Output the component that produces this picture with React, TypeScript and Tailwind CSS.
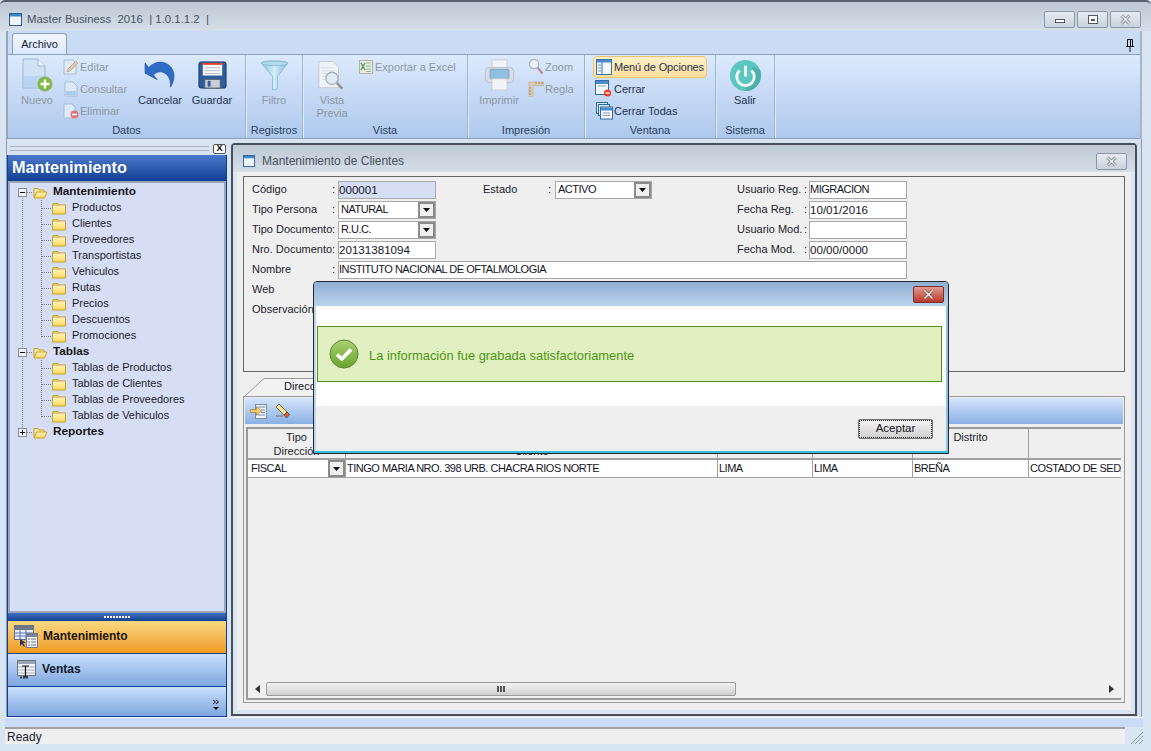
import React from "react";

const WinIcon = ({ s = 14 }: { s?: number }) => (
  <svg width={s} height={s} viewBox="0 0 14 14" className="shrink-0">
    <rect x="0.5" y="0.5" width="12" height="12" fill="#eef5fb" stroke="#2a5f96" />
    <rect x="1" y="1" width="11" height="2.5" fill="#3f86c6" />
  </svg>
);

const Folder = ({ open }: { open?: boolean }) => (
  <svg width="15" height="13" viewBox="0 0 15 13" className="shrink-0">
    <defs>
      <linearGradient id="fg" x1="0" y1="0" x2="0" y2="1">
        <stop offset="0" stopColor="#fff7c4" />
        <stop offset="1" stopColor="#fbd65c" />
      </linearGradient>
    </defs>
    {open ? (
      <>
        <path d="M1 11V2.5h4l1 1.5h5v2" fill="#fdeaa0" stroke="#c9a12e" />
        <path d="M1 12l2.5-6H14l-2.5 6z" fill="url(#fg)" stroke="#c9a12e" />
      </>
    ) : (
      <>
        <path d="M1 3V1.5h5L7 3" fill="#fdeaa0" stroke="#c9a12e" />
        <rect x="0.5" y="3" width="13" height="9" fill="url(#fg)" stroke="#c9a12e" />
      </>
    )}
  </svg>
);

const Dot = "#7d7d7d";
const TopConn = ({ plus, more, first }: { plus?: boolean; more?: boolean; first?: boolean }) => (
  <svg width="23" height="16" viewBox="0 0 23 16" className="shrink-0">
    {!first && <line x1="12.5" y1="0" x2="12.5" y2="4" stroke={Dot} strokeDasharray="1 1" />}
    {more && <line x1="12.5" y1="12" x2="12.5" y2="16" stroke={Dot} strokeDasharray="1 1" />}
    <line x1="17" y1="8.5" x2="23" y2="8.5" stroke={Dot} strokeDasharray="1 1" />
    <rect x="8.5" y="4.5" width="8" height="8" fill="#f5f6fa" stroke="#7f8a99" />
    <line x1="10" y1="8.5" x2="15" y2="8.5" stroke="#111" />
    {plus && <line x1="12.5" y1="6" x2="12.5" y2="11" stroke="#111" />}
  </svg>
);
const ChildConn = ({ last, more }: { last?: boolean; more?: boolean }) => (
  <svg width="42" height="16" viewBox="0 0 42 16" className="shrink-0">
    {more && <line x1="12.5" y1="0" x2="12.5" y2="16" stroke={Dot} strokeDasharray="1 1" />}
    <line x1="31.5" y1="0" x2="31.5" y2={last ? 9 : 16} stroke={Dot} strokeDasharray="1 1" />
    <line x1="32" y1="8.5" x2="42" y2="8.5" stroke={Dot} strokeDasharray="1 1" />
  </svg>
);

const TopNode = ({ label, plus, more, first }: { label: string; plus?: boolean; more?: boolean; first?: boolean }) => (
  <div className="flex h-4 items-center">
    <TopConn plus={plus} more={more} first={first} />
    <Folder open />
    <span className="ml-[5px] pb-[2px] text-[11.75px] font-bold text-[#151515]">{label}</span>
  </div>
);
const Child = ({ label, last, more }: { label: string; last?: boolean; more?: boolean }) => (
  <div className="flex h-4 items-center">
    <ChildConn last={last} more={more} />
    <Folder />
    <span className="ml-[5px] pb-[2px] text-[#1c1c2c]">{label}</span>
  </div>
);

const DocBase = ({ dim }: { dim?: boolean }) => (
  <>
    <path d="M3 1h15l7 7v22H3z" fill={dim ? "#d5e4f5" : "#cfe2f6"} stroke="#9ab6d4" />
    <path d="M18 1v7h7" fill="#f3f8fd" stroke="#9ab6d4" />
    <rect x="4" y="18" width="20" height="11" fill="#a9cdf0" opacity="0.6" />
  </>
);

const IconNuevo = () => (
  <svg width="34" height="34" viewBox="0 0 34 34">
    <DocBase />
    <circle cx="25" cy="26" r="7" fill="#7dbb3c" stroke="#8fa56a" />
    <path d="M25 21.5v9M20.5 26h9" stroke="#fff" strokeWidth="2.4" />
  </svg>
);
const IconUndo = () => (
  <svg width="32" height="30" viewBox="0 0 34 32">
    <path d="M1 14l0-11 4 5C10 3 16 1 22 3c8 3 12 11 9 20-1 3-2 5-3 6 1-7-2-14-8-16-4-1-7 0-10 3l4 5z" fill="#2f6cc5" stroke="#1f4f9e" strokeWidth="0.6" />
  </svg>
);
const IconSave = () => (
  <svg width="29" height="29" viewBox="0 0 30 30">
    <rect x="1" y="1" width="28" height="27" rx="2" fill="#2d5d9e" stroke="#17335f" />
    <rect x="5" y="2" width="20" height="13" fill="#fbfbfb" />
    <rect x="5" y="2" width="20" height="2" fill="#e2432b" />
    <path d="M7 7h16M7 10h16M7 13h16" stroke="#b5b9c2" />
    <rect x="7" y="19" width="16" height="9" fill="#c9ced6" stroke="#59606b" />
    <rect x="10" y="20.5" width="3" height="6" fill="#2d5d9e" />
  </svg>
);
const IconFilter = () => (
  <svg width="29" height="31" viewBox="0 0 30 32">
    <defs>
      <linearGradient id="ff" x1="0" y1="0" x2="1" y2="0">
        <stop offset="0" stopColor="#7fc4dd" />
        <stop offset="0.5" stopColor="#d4edf6" />
        <stop offset="1" stopColor="#78bcd8" />
      </linearGradient>
    </defs>
    <path d="M1 3C5 0 25 0 29 3L18 17v13l-5 1V17z" fill="url(#ff)" stroke="#8dbdd3" />
    <ellipse cx="15" cy="3.5" rx="13" ry="2.3" fill="#b6dcec" stroke="#8dbdd3" />
  </svg>
);
const IconPreview = () => (
  <svg width="30" height="31" viewBox="0 0 32 32">
    <path d="M2 1h15l6 6v22H2z" fill="#eef3f8" stroke="#c1c9d3" />
    <path d="M5 8h12M5 11h14M5 14h14M5 17h14M5 20h10" stroke="#d7dbe2" />
    <circle cx="16" cy="19" r="6.5" fill="#dbeaf5" fillOpacity="0.7" stroke="#a5adb8" strokeWidth="1.4" />
    <path d="M21 24l6 6" stroke="#8e8f90" strokeWidth="2.4" />
  </svg>
);
const IconPrinter = () => (
  <svg width="31" height="32" viewBox="0 0 32 34">
    <rect x="8" y="1" width="16" height="10" fill="#f2f5f8" stroke="#c5ccd5" />
    <rect x="1" y="9" width="30" height="16" rx="4" fill="#d7dee6" stroke="#b8c0ca" />
    <rect x="6" y="11" width="20" height="10" rx="1" fill="#8fc0e0" stroke="#7da4c0" />
    <rect x="8" y="21" width="16" height="12" fill="#f2f5f8" stroke="#c5ccd5" />
  </svg>
);
const IconMag = () => (
  <svg width="16" height="18" viewBox="0 0 16 18">
    <circle cx="6" cy="6" r="4.6" fill="#eaf2fa" stroke="#a7b1bd" strokeWidth="1.2" />
    <path d="M9.5 9.5l5 6" stroke="#b58a8a" strokeWidth="2" />
  </svg>
);
const IconRuler = () => (
  <svg width="16" height="16" viewBox="0 0 16 16">
    <path d="M1 1h15v3.5H5V16H1z" fill="#dfcdb3" stroke="#b9a487" strokeWidth="0.6" />
    <path d="M8 1v2M11 1v2M14 1v2M1 7h2M1 10h2M1 13h2" stroke="#9c8566" />
  </svg>
);
const IconEdit = () => (
  <svg width="16" height="16" viewBox="0 0 16 16">
    <path d="M1 1h9l3 3v11H1z" fill="#dfeaf7" stroke="#a8bdd4" />
    <path d="M4 13l1-3 8-8 2 2-8 8z" fill="#ecc2a3" stroke="#a89a8e" strokeWidth="0.6" />
  </svg>
);
const IconDoc = () => (
  <svg width="16" height="16" viewBox="0 0 16 16">
    <path d="M2 1h8l4 4v10H2z" fill="#dce9f7" stroke="#a8bdd4" />
    <rect x="3" y="10" width="10" height="4" fill="#a9cdf0" />
  </svg>
);
const IconDel = () => (
  <svg width="16" height="16" viewBox="0 0 16 16">
    <path d="M1 1h8l3 3v11H1z" fill="#dce9f7" stroke="#a8bdd4" />
    <circle cx="11.5" cy="11.5" r="4" fill="#dd7b78" />
    <path d="M9 11.5h5" stroke="#fff" strokeWidth="1.4" />
  </svg>
);
const IconExcel = () => (
  <svg width="14" height="14" viewBox="0 0 14 14">
    <rect x="0.5" y="0.5" width="13" height="13" fill="#e4ece0" stroke="#a9b5a5" />
    <path d="M7 3h5M7 6h5M7 9h5M7 11.5h5" stroke="#9fb59c" />
    <path d="M2 3l4 7M6 3l-4 7" stroke="#5f9a63" strokeWidth="1.5" />
  </svg>
);
const IconMenu = () => (
  <svg width="16" height="16" viewBox="0 0 16 16">
    <rect x="0.5" y="0.5" width="15" height="15" fill="#f3f8fd" stroke="#3973ad" />
    <rect x="1" y="1" width="14" height="2.5" fill="#4a8ccb" />
    <path d="M6 3.5V15" stroke="#3973ad" />
    <path d="M2 6h3M2 9h3M2 12h3" stroke="#6f9ac5" />
  </svg>
);
const IconClose = () => (
  <svg width="18" height="18" viewBox="0 0 18 18">
    <rect x="0.5" y="0.5" width="13" height="14" fill="#f3f8fd" stroke="#2f6aa6" />
    <rect x="1" y="1" width="12" height="3" fill="#4a8ccb" />
    <path d="M3 6h8" stroke="#8aa" />
    <circle cx="12.5" cy="13" r="3.6" fill="#e8402f" />
    <path d="M10.5 13h4" stroke="#fff" strokeWidth="1.3" />
  </svg>
);
const IconCloseAll = () => (
  <svg width="17" height="18" viewBox="0 0 17 18">
    <rect x="0.5" y="0.5" width="11" height="11" fill="#d8e8f6" stroke="#2f6aa6" />
    <rect x="2.5" y="2.5" width="11" height="11" fill="#d8e8f6" stroke="#2f6aa6" />
    <rect x="4.5" y="5" width="12" height="12" fill="#f3f8fd" stroke="#2f6aa6" />
    <rect x="5" y="5.5" width="11" height="3" fill="#4a8ccb" />
    <path d="M7 11h7M7 13.5h7" stroke="#99b" />
  </svg>
);
const IconPower = () => (
  <svg width="33" height="33" viewBox="0 0 34 34">
    <circle cx="17" cy="17" r="16" fill="#5cc7c0" />
    <path d="M17 33a16 16 0 0 0 16-16c0-2-0.4-4-1-5.600L24 8l-1 17-8 8z" fill="#46a6a2" opacity="0.7" />
    <path d="M10.800 11.800a9 9 0 1 0 12.400 0" fill="none" stroke="#f4fbfb" strokeWidth="3" />
    <path d="M17 7v11" stroke="#f4fbfb" strokeWidth="3" />
  </svg>
);
const IconPin = () => (
  <svg width="8" height="13" viewBox="0 0 8 13">
    <path d="M1.500 0.500h5v7h-5zM0 7.500h8M4 8v5" fill="none" stroke="#111" />
    <path d="M4.500 1v6" stroke="#111" />
  </svg>
);
const IconNavMant = () => (
  <svg width="25" height="24" viewBox="0 0 25 24">
    <rect x="0.500" y="0.500" width="19" height="14" fill="#e8ecf2" stroke="#66707f" />
    <rect x="1" y="1" width="18" height="4" fill="#6e7888" />
    <path d="M1 8h18M1 11h18M6 5v9M12 5v9" stroke="#5a78b8" />
    <path d="M6 14l0 7 2-2 2 3 1-1-2-3h3z" fill="#1d3768" />
    <rect x="12.500" y="8.500" width="11" height="14" fill="#edf0f4" stroke="#6e7888" />
    <rect x="13" y="9" width="10" height="3" fill="#7b8595" />
    <path d="M17 14h5M17 17h5M17 20h5M14 14h2M14 17h2M14 20h2" stroke="#6e7888" />
  </svg>
);
const IconNavVentas = () => (
  <svg width="20" height="20" viewBox="0 0 20 20">
    <rect x="0.500" y="0.500" width="18" height="15" fill="#f3f5f8" stroke="#6c7585" />
    <rect x="1" y="1" width="17" height="3" fill="#9aa5b5" />
    <path d="M1 7h17M1 10h17M1 13h17" stroke="#a8b0be" />
    <path d="M5 6h7M8.500 6v11M6 17h5" stroke="#111" strokeWidth="1.200" />
    <rect x="3" y="16.500" width="2" height="2" fill="#333" />
    <rect x="6" y="16.500" width="2" height="2" fill="#333" />
    <rect x="9" y="16.500" width="2" height="2" fill="#333" />
  </svg>
);
const IconTool1 = () => (
  <svg width="17" height="15" viewBox="0 0 17 15">
    <rect x="5.500" y="0.500" width="11" height="14" fill="#f2f6fa" stroke="#7d8ea3" />
    <path d="M8 3h7M8 11h7M11 6h4M11 8.500h4" stroke="#5f88c0" />
    <path d="M0.500 5.500h6v-3l5 4.500-5 4.500v-3h-6z" fill="#f5cd6a" stroke="#a67d20" strokeWidth="0.700" />
  </svg>
);
const IconTool2 = () => (
  <svg width="15" height="15" viewBox="0 0 15 15">
    <path d="M1 3l3-3 8 8-3 3z" fill="#f7e78c" stroke="#333" strokeWidth="0.700" />
    <path d="M9 11l3-3 2.500 2.500-3 3.500z" fill="#e45e2c" stroke="#333" strokeWidth="0.700" />
    <path d="M1 12h7" stroke="#888" strokeWidth="1.500" />
  </svg>
);
const IconCheck = () => (
  <svg width="30" height="31" viewBox="0 0 30 31">
    <defs>
      <linearGradient id="cg" x1="0" y1="0" x2="0" y2="1">
        <stop offset="0" stopColor="#a9d173" />
        <stop offset="1" stopColor="#69a42e" />
      </linearGradient>
    </defs>
    <circle cx="15" cy="15" r="14" fill="url(#cg)" stroke="#5f8a39" />
    <path d="M8 15.500l4.800 4.500L22 10.500" fill="none" stroke="#fff" strokeWidth="3.600" />
  </svg>
);

const Big = ({ icon, label, w, dim }: { icon: React.ReactNode; label: React.ReactNode; w: string; dim?: boolean }) => (
  <div className={`flex flex-col items-center pt-[3px] ${w}`}>
    <div className="flex h-[34px] items-center justify-center">{icon}</div>
    <div className={`mt-[2px] text-center leading-[13px] ${dim ? "text-[#8d97a4]" : "text-[#1f3350]"}`}>{label}</div>
  </div>
);

const Small = ({ icon, label, dim, w = "w-[16px]" }: { icon: React.ReactNode; label: string; dim?: boolean; w?: string }) => (
  <div className="flex h-[22px] items-center">
    <div className={`${w} flex justify-center`}>{icon}</div>
    <span className={`ml-[1px] whitespace-nowrap ${dim ? "text-[#8d97a4]" : "text-[#1f3350]"}`}>{label}</span>
  </div>
);

const Group = ({ w, label, children }: { w: string; label: string; children: React.ReactNode }) => (
  <div className={`flex flex-col border-r border-[#9db4d4] shadow-[1px_0_0_#dfeafb] ${w}`}>
    <div className="flex h-[67px]">{children}</div>
    <div className="flex-1 pt-[1px] text-center leading-[15px] text-[#27405f]">{label}</div>
  </div>
);

const WinBtn = ({ children }: { children: React.ReactNode }) => (
  <div className="flex h-[17px] w-[31px] items-center justify-center rounded-[2px] border border-[#8a97a6] bg-gradient-to-b from-[#e6ecf2] to-[#c8d2dc]">
    {children}
  </div>
);

const XGlyph = ({ c = "#6b7785", i = "#ffffff" }: { c?: string; i?: string }) => (
  <svg width="13" height="11" viewBox="0 0 13 11">
    <path d="M2.500 1.500l8 8M10.500 1.500l-8 8" stroke={c} strokeWidth="3" />
    <path d="M2.500 1.500l8 8M10.500 1.500l-8 8" stroke={i} strokeWidth="1.300" />
  </svg>
);

const Arrow = () => (
  <div className="flex h-full w-[17px] shrink-0 items-center justify-center border-2 border-[#8a8a8a] bg-[#efefef]">
    <svg width="7" height="4" viewBox="0 0 7 4"><path d="M0 0h7L3.500 4z" fill="#111" /></svg>
  </div>
);

const Lbl = ({ w, children }: { w: string; children: React.ReactNode }) => (
  <div className={`${w} flex shrink-0 whitespace-nowrap`}>{children}</div>
);

const Caps = ({ children }: { children: React.ReactNode }) => (
  <span className="tracking-[-0.5px]">{children}</span>
);

const Input = ({ w, v, bg = "bg-white", caps }: { w: string; v: string; bg?: string; caps?: boolean }) => (
  <div className={`h-[18px] ${w} shrink-0 overflow-hidden whitespace-nowrap border border-[#a8a8a8] ${bg} leading-[15px] text-[#15151f] ${caps ? "" : "text-[11.6px]"}`}>
    {caps ? <Caps>{v}</Caps> : v}
  </div>
);

const Combo = ({ w, v }: { w: string; v: string }) => (
  <div className={`h-[18px] ${w} flex shrink-0 justify-between border border-[#a8a8a8] bg-white pl-[2px] leading-[15px] text-[#15151f]`}>
    <Caps>{v}</Caps>
    <Arrow />
  </div>
);

const Colon = ({ w = "w-[6px]" }: { w?: string }) => <div className={`${w} shrink-0`}>:</div>;

const Cell = ({ w, children, last }: { w: string; children?: React.ReactNode; last?: boolean }) => (
  <div className={`${w} shrink-0 overflow-hidden whitespace-nowrap pl-[1px] ${last ? "" : "border-r border-[#a0a0a0]"}`}><Caps>{children}</Caps></div>
);

const Head = ({ w, children }: { w: string; children?: React.ReactNode }) => (
  <div className={`${w} shrink-0 border-r border-[#a0a0a0] pt-[1px] text-center leading-[14px] text-[#1c1c2c]`}>{children}</div>
);

export default function App() {
  return (
    <div className="relative flex h-[751px] w-[1151px] flex-col overflow-hidden bg-[#d8e5f2] font-['Liberation_Sans',sans-serif] text-[11px] text-[#1c1c2c]">
      {/* Title bar */}
      <div className="flex h-[31px] shrink-0 items-center rounded-t-[5px] border-t-2 border-[#59616d] bg-gradient-to-b from-[#bcc8d3] to-[#d5dfe9] pl-[9px] pr-[10px] pt-[7px]">
        <WinIcon />
        <span className="ml-[4px] whitespace-pre text-[11.4px] text-[#47525f]">Master Business  2016  | 1.0.1.1.2  |</span>
        <div className="ml-auto flex gap-[2px] pb-[1px]">
          <WinBtn><div className="mt-[3px] h-[4px] w-[10px] border border-[#4d5a68] bg-white" /></WinBtn>
          <WinBtn><div className="flex h-[9px] w-[10px] items-center justify-center border border-[#4d5a68] bg-white"><div className="h-[2px] w-[4px] bg-[#4d5a68]" /></div></WinBtn>
          <WinBtn><XGlyph /></WinBtn>
        </div>
      </div>

      {/* Ribbon */}
      <div className="mx-[6px] mr-[9px] flex shrink-0 flex-col border-x-2 border-[#98a4b3] border-r-[#aab6c6]">
        <div className="flex h-[23px] items-end justify-between bg-[#c9dbf5] pl-[4px] pr-[6px]">
          <div className="flex h-[21px] w-[55px] items-center justify-center rounded-t-[3px] border border-b-0 border-[#8ba0bd] bg-gradient-to-b from-[#f2f7fe] to-[#dbe9fd] text-[#152238]">Archivo</div>
          <div className="pb-[2px]"><IconPin /></div>
        </div>
        <div className="flex h-[85px] border-y border-[#8aa0bd] bg-gradient-to-b from-[#dceafd] to-[#aec8ec]">
          <Group w="w-[238px]" label="Datos">
            <div className="w-[4px]" />
            <Big icon={<IconNuevo />} label="Nuevo" w="w-[50px]" dim />
            <div className="w-[72px] pl-[1px] pt-[1px]">
              <Small icon={<IconEdit />} label="Editar" dim />
              <Small icon={<IconDoc />} label="Consultar" dim />
              <Small icon={<IconDel />} label="Eliminar" dim />
            </div>
            <Big icon={<IconUndo />} label="Cancelar" w="w-[52px]" />
            <Big icon={<IconSave />} label="Guardar" w="w-[52px]" />
          </Group>
          <Group w="w-[57px]" label="Registros">
            <Big icon={<IconFilter />} label="Filtro" w="w-[56px]" dim />
          </Group>
          <Group w="w-[165px]" label="Vista">
            <div className="w-[4px]" />
            <Big icon={<IconPreview />} label={<>Vista<br />Previa</>} w="w-[50px]" dim />
            <div className="pl-[1px] pt-[1px]">
              <Small icon={<IconExcel />} label="Exportar a Excel" dim />
            </div>
          </Group>
          <Group w="w-[117px]" label="Impresión">
            <div className="w-[6px]" />
            <Big icon={<IconPrinter />} label="Imprimir" w="w-[50px]" dim />
            <div className="pl-[4px] pt-[1px]">
              <Small icon={<IconMag />} label="Zoom" dim />
              <Small icon={<IconRuler />} label="Regla" dim />
            </div>
          </Group>
          <Group w="w-[131px]" label="Ventana">
            <div className="pl-[8px] pt-[1px]">
              <div className="flex h-[22px] w-[114px] items-center rounded-[4px] border border-[#efc46c] bg-gradient-to-b from-[#fff0c8] to-[#fddf9c] pl-[2px]">
                <IconMenu />
                <span className="ml-[2px] whitespace-nowrap tracking-[-0.15px] text-[#1f3350]">Menú de Opciones</span>
              </div>
              <div className="pl-[2px]">
                <Small icon={<IconClose />} label="Cerrar" w="w-[18px]" />
                <Small icon={<IconCloseAll />} label="Cerrar Todas" w="w-[18px]" />
              </div>
            </div>
          </Group>
          <Group w="w-[59px]" label="Sistema">
            <Big icon={<IconPower />} label="Salir" w="w-[58px]" />
          </Group>
        </div>
      </div>

      {/* Work area */}
      <div className="mx-[6px] mr-[9px] flex h-[578px] shrink-0 border-x border-[#8f9aa8] bg-[#d8e4f3]">
        {/* Sidebar */}
        <div className="flex w-[220px] shrink-0 flex-col">
          <div className="flex h-[16px] items-center pl-[3px] pr-[1px] pt-[3px]">
            <div className="h-[5px] flex-1 border-y border-[#adb2b9]" />
            <div className="ml-[4px] flex h-[10px] w-[13px] items-center justify-center rounded-[2px] border border-[#555] bg-white text-[9px] font-bold leading-none text-black">X</div>
          </div>
          <div className="flex flex-1 flex-col border border-t-0 border-[#0f3f92] bg-[#103f95]">
            <div className="flex h-[26px] items-center bg-gradient-to-b from-[#4b78c9] to-[#0f3f95] pb-[2px] pl-[4px] text-[16.3px] font-bold text-white">Mantenimiento</div>
            <div className="h-[432px] border-2 border-[#9aa5b5] bg-[#d6def5] pt-[1px]">
              <TopNode label="Mantenimiento" first more />
              {["Productos", "Clientes", "Proveedores", "Transportistas", "Vehiculos", "Rutas", "Precios", "Descuentos"].map((t) => (
                <Child key={t} label={t} more />
              ))}
              <Child label="Promociones" last more />
              <TopNode label="Tablas" more />
              {["Tablas de Productos", "Tablas de Clientes", "Tablas de Proveedores"].map((t) => (
                <Child key={t} label={t} more />
              ))}
              <Child label="Tablas de Vehiculos" last more />
              <TopNode label="Reportes" plus />
            </div>
            <div className="flex h-[8px] items-center justify-center gap-[1px] bg-gradient-to-b from-[#3f6fc2] to-[#113f92]">
              {Array.from({ length: 9 }).map((_, i) => (
                <div key={i} className="h-[2px] w-[2px] bg-white" />
              ))}
            </div>
            <div className="flex h-[33px] items-center border-b border-[#0f3f92] bg-gradient-to-b from-[#fad97f] to-[#ef9a1a] pl-[6px] text-[12px] font-bold text-[#1a1408]">
              <IconNavMant />
              <span className="ml-[4px] pb-[2px]">Mantenimiento</span>
            </div>
            <div className="flex h-[33px] items-center border-b border-[#0f3f92] bg-gradient-to-b from-[#cbe0fa] to-[#7ea6df] pl-[9px] text-[12px] font-bold text-[#101a30]">
              <IconNavVentas />
              <span className="ml-[5px] pb-[2px]">Ventas</span>
            </div>
            <div className="flex flex-1 items-end justify-end bg-gradient-to-b from-[#cbe0fa] to-[#7ea6df] pb-[6px] pr-[6px]">
              <svg width="8" height="11" viewBox="0 0 8 11">
                <path d="M1 1l2.500 2L1 5M4 1l2.500 2L4 5" fill="none" stroke="#111" />
                <path d="M1 8h6L4 11z" fill="#111" />
              </svg>
            </div>
          </div>
        </div>

        {/* Child window */}
        <div className="mb-[1px] ml-[4px] mt-[4px] flex w-[906px] shrink-0 flex-col rounded-t-[4px] border-2 border-[#4a4f57] bg-[#d8e5f2] px-[4px] pb-[4px]">
          <div className="-mx-[4px] flex h-[27px] shrink-0 items-center bg-gradient-to-b from-[#bcc8d3] to-[#d5dfe9] pl-[10px] pr-[8px] pt-[5px]">
            <WinIcon s={13} />
            <span className="ml-[6px] text-[12px] text-[#47525f]">Mantenimiento de Clientes</span>
            <div className="ml-auto"><WinBtn><XGlyph /></WinBtn></div>
          </div>
          <div className="flex flex-1 flex-col bg-[#efefef] px-[6px] pt-[4px]">
            {/* Form */}
            <div className="h-[196px] shrink-0 border border-[#666] pl-[8px] pt-[4px]">
              <div className="flex h-[20px]">
                <Lbl w="w-[80px]">Código</Lbl><Colon />
                <Input w="w-[98px]" v="000001" bg="bg-[#d6def5]" />
                <Lbl w="w-[47px] ml-[47px]">Estado</Lbl><div className="w-[18px]" /><Colon w="w-[7px]" />
                <Combo w="w-[97px]" v="ACTIVO" />
                <Lbl w="w-[67px] ml-[85px]">Usuario Reg.</Lbl><Colon w="w-[5px]" />
                <Input w="w-[98px]" v="MIGRACION" caps />
              </div>
              <div className="flex h-[20px]">
                <Lbl w="w-[80px]">Tipo Persona</Lbl><Colon />
                <Combo w="w-[98px]" v="NATURAL" />
                <div className="w-[301px]" />
                <Lbl w="w-[67px]">Fecha Reg.</Lbl><Colon w="w-[5px]" />
                <Input w="w-[98px]" v="10/01/2016" />
              </div>
              <div className="flex h-[20px]">
                <Lbl w="w-[80px]">Tipo Documento</Lbl><Colon />
                <Combo w="w-[98px]" v="R.U.C." />
                <div className="w-[301px]" />
                <Lbl w="w-[67px]">Usuario Mod.</Lbl><Colon w="w-[5px]" />
                <Input w="w-[98px]" v="" />
              </div>
              <div className="flex h-[20px]">
                <Lbl w="w-[80px]">Nro. Documento</Lbl><Colon />
                <Input w="w-[98px]" v="20131381094" />
                <div className="w-[301px]" />
                <Lbl w="w-[67px]">Fecha Mod.</Lbl><Colon w="w-[5px]" />
                <Input w="w-[98px]" v="00/00/0000" />
              </div>
              <div className="flex h-[20px]">
                <Lbl w="w-[80px]">Nombre</Lbl><Colon />
                <Input w="w-[569px]" v="INSTITUTO NACIONAL DE OFTALMOLOGIA" caps />
              </div>
              <div className="flex h-[20px]"><Lbl w="w-[80px]">Web</Lbl></div>
              <div className="flex h-[20px]"><Lbl w="w-[80px]">Observación</Lbl></div>
            </div>

            {/* Tab */}
            <div className="mt-[6px] flex h-[18px] shrink-0 items-end pl-[2px]">
              <svg width="20" height="18" viewBox="0 0 20 18"><path d="M0 18L19 0.500h1V18z" fill="#f2f2f2" /><path d="M0 18L19 0.500h1" fill="none" stroke="#9a9a9a" /></svg>
              <div className="flex h-[18px] w-[100px] items-center border-t border-[#9a9a9a] bg-[#f2f2f2] pb-[2px] pl-[19px] text-[#15151f]">Direcciones</div>
            </div>

            {/* Panel */}
            <div className="flex h-[307px] shrink-0 flex-col border border-[#999] p-[1px] pb-[2px]">
              <div className="flex h-[26px] shrink-0 items-center gap-[8px] bg-gradient-to-b from-[#d4e5fb] to-[#8bb0e6] pl-[5px]">
                <IconTool1 />
                <IconTool2 />
              </div>
              <div className="ml-[1px] mr-[2px] mt-[3px] flex flex-1 flex-col border-2 border-r-0 border-[#9a9a9a] bg-[#efefef]">
                <div className="flex h-[31px] shrink-0 border-b-2 border-[#a0a0a0]">
                  <Head w="w-[98px]">Tipo<br />Dirección</Head>
                  <Head w="w-[372px]">Dirección<br />Cliente</Head>
                  <Head w="w-[95px]"></Head>
                  <Head w="w-[100px]"></Head>
                  <Head w="w-[116px]">Distrito</Head>
                  <div className="flex-1" />
                </div>
                <div className="flex h-[18px] shrink-0 border-b border-[#a0a0a0] bg-white leading-[16px] text-[#15151f]">
                  <div className="flex w-[98px] shrink-0 justify-between border-r border-[#a0a0a0] pl-[3px]"><Caps>FISCAL</Caps><Arrow /></div>
                  <Cell w="w-[372px]">TINGO MARIA NRO. 398 URB. CHACRA RIOS NORTE</Cell>
                  <Cell w="w-[95px]">LIMA</Cell>
                  <Cell w="w-[100px]">LIMA</Cell>
                  <Cell w="w-[116px]">BREÑA</Cell>
                  <Cell w="w-[92px]" last>COSTADO DE SEDAPAL</Cell>
                </div>
                <div className="flex-1" />
                <div className="mx-[1px] mb-[2px] flex h-[15px] shrink-0 items-center bg-[#efefef]">
                  <div className="flex w-[17px] justify-center">
                    <svg width="5" height="8" viewBox="0 0 5 8"><path d="M5 0v8L0 4z" fill="#333" /></svg>
                  </div>
                  <div className="flex h-[14px] w-[470px] items-center justify-center rounded-[2px] border border-[#9b9b9b] bg-gradient-to-b from-[#f2f2f2] to-[#d0d0d0]">
                    <div className="h-[6px] w-[8px] border-x-2 border-[#555]"><div className="mx-auto h-full w-[2px] bg-[#555]" /></div>
                  </div>
                  <div className="ml-auto flex w-[17px] justify-center">
                    <svg width="5" height="8" viewBox="0 0 5 8"><path d="M0 0v8l5-4z" fill="#333" /></svg>
                  </div>
                </div>
              </div>
            </div>
          </div>
        </div>
        <div className="flex-1 bg-[#d6def5]" />
      </div>

      {/* Status */}
      <div className="ml-[5px] mr-[8px] h-[10px] shrink-0 border-t border-white bg-[#c9dbf5]" />
      <div className="ml-[5px] mr-[26px] flex h-[17px] shrink-0 items-center border-t-2 border-[#a0a0a0] bg-[#efefef] pl-[2px] text-[12px] text-[#1c2434]">
        Ready
      </div>
      <div className="flex flex-1 justify-end pr-[8px]">
        <svg width="12" height="12" viewBox="0 0 12 12" className="-mt-[12px]">
          <path d="M0 12L12 0M4 12l8-8M8 12l4-4" stroke="#8b98a7" />
        </svg>
      </div>

      {/* Dialog */}
      <div className="absolute left-[313px] top-[281px] flex h-[173px] w-[636px] flex-col rounded-t-[4px] border border-[#23272e] bg-[#efefef] shadow-[inset_0_-2px_0_#35bde0,inset_2px_0_0_#bcd6ee,inset_-2px_0_0_#8fc4e6]">
        <div className="flex h-[24px] shrink-0 items-start justify-end rounded-t-[3px] bg-gradient-to-b from-[#8fafd2] to-[#bad3eb] pr-[4px] pt-[4px]">
          <div className="flex h-[17px] w-[31px] items-center justify-center rounded-[2px] border border-[#7c2e2e] bg-gradient-to-b from-[#e19a90] to-[#b8382a]">
            <XGlyph c="#8c4a44" />
          </div>
        </div>
        <div className="mx-[2px] h-[100px] shrink-0 bg-white px-[1px] pt-[20px]">
          <div className="flex h-[56px] w-[625px] items-center border border-[#4f8f12] bg-[#e0f0c0] pl-[11px]">
            <IconCheck />
            <span className="ml-[10px] pt-[3px] text-[12.9px] text-[#4e9414]">La información fue grabada satisfactoriamente</span>
          </div>
        </div>
        <div className="flex flex-1 justify-end pr-[15px] pt-[13px]">
          <div className="flex h-[20px] w-[75px] items-center justify-center rounded-[2px] border border-[#777] bg-gradient-to-b from-[#f5f5f5] to-[#cfcfcf] text-[11.5px] text-[#15151f] outline-1 -outline-offset-2 outline-dotted outline-[#333]">Aceptar</div>
        </div>
      </div>
    </div>
  );
}
